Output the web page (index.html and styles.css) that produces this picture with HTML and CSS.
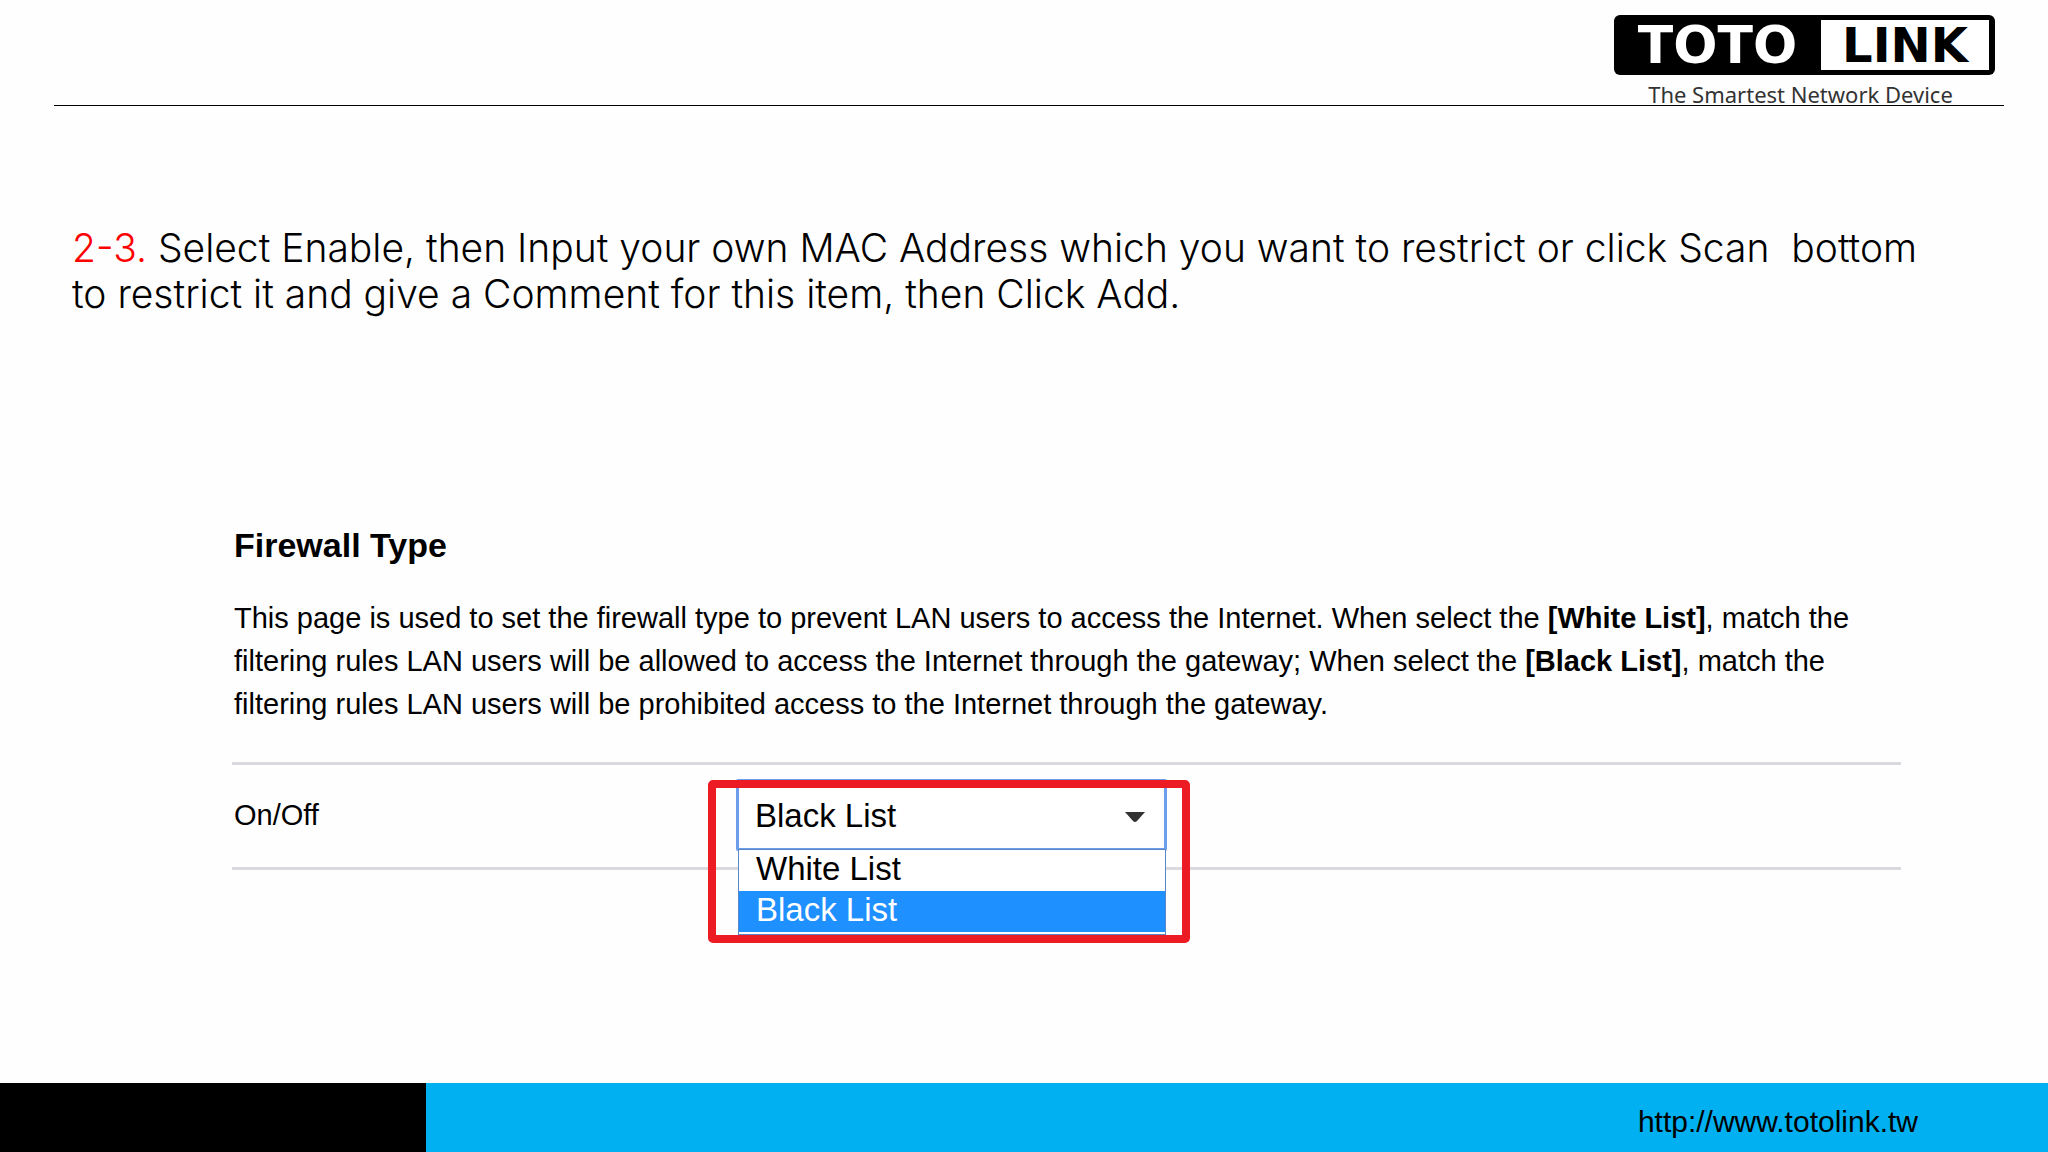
FILE: index.html
```
<!DOCTYPE html>
<html lang="en">

<head>
    <meta charset="UTF-8">
    <meta name="viewport" content="width=device-width, initial-scale=1.0">
    <title>TOTOLINK - Firewall Type</title>
    <link rel="stylesheet" href="styles.css">
</head>

<body>
    <header class="header">
        <div class="logo">
            <div class="logo-box">
                <span class="logo-toto">TOTO</span>
                <span class="logo-link">LINK</span>
            </div>
            <div class="logo-text">The Smartest Network Device</div>
        </div>
    </header>

    <main class="main">
        <p class="step"><span class="step-number">2-3.</span> Select Enable, then Input your own MAC Address which you want to restrict or click Scan&nbsp; bottom<br>to restrict it and give a Comment for this item, then Click Add.</p>

        <section class="firewall">
            <h1 class="title">Firewall Type</h1>
            <p class="description">This page is used to set the firewall type to prevent LAN users to access the Internet. When select the <b>[White List]</b>, match the filtering rules LAN users will be allowed to access the Internet through the gateway; When select the <b>[Black List]</b>, match the filtering rules LAN users will be prohibited access to the Internet through the gateway.</p>

            <div class="row">
                <label class="row-label" for="type">On/Off</label>
                <div class="select-wrap">
                    <select class="select" id="type">
                        <option>White List</option>
                        <option selected>Black List</option>
                    </select>
                    <svg class="arrow" width="20" height="10" viewBox="0 0 20 10">
                        <path d="M0 0h20l-8 9q-2 2-4 0z" fill="#333" />
                    </svg>
                    <ul class="list" role="listbox" aria-label="On/Off">
                        <li class="item" role="option">White List</li>
                        <li class="item active" role="option" aria-selected="true">Black List</li>
                    </ul>
                    <div class="mark"></div>
                </div>
            </div>
        </section>
    </main>

    <footer class="footer">
        <div class="footer-left"></div>
        <div class="footer-right">
            <a class="footer-link" href="http://www.totolink.tw">http://www.totolink.tw</a>
        </div>
    </footer>
</body>

</html>
```
FILE: styles.css
```
* {
    box-sizing: border-box;
}

body {
    display: flex;
    flex-direction: column;
    min-height: 100vh;
    margin: 0;
    background-color: #fefefe;
    color: #000;
    font-family: "Liberation Sans", Arial, sans-serif;
}

/* header */
.header {
    display: flex;
    justify-content: flex-end;
    margin: 0 44px 0 54px;
    padding: 15px 9px 0 0;
    border-bottom: 1px solid #000;
}

.logo {
    width: 381px;
}

.logo-box {
    display: flex;
    height: 60px;
    padding: 5px 6px 5px 0;
    border-radius: 6px;
    background-color: #000;
    font-family: "DejaVu Sans", sans-serif;
    font-weight: bold;
    line-height: 50px;
    text-align: center;
}

.logo-toto {
    flex: 207;
    color: #fff;
    font-size: 52px;
}

.logo-link {
    flex: 168;
    background-color: #fff;
    font-size: 48px;
}

.logo-text {
    height: 30px;
    padding-right: 8px;
    color: #333;
    font-family: "Noto Sans", sans-serif;
    font-size: 22px;
    line-height: 38px;
    text-align: center;
    white-space: nowrap;
}

/* content */
.main {
    padding: 119px 72px 0;
}

.step {
    margin: 0;
    font-family: Inter, sans-serif;
    font-size: 39px;
    font-weight: 300;
    line-height: 46px;
}

.step-number {
    color: #f00;
}

.firewall {
    margin: 208px 75px 0 160px;
}

.title {
    margin: 0;
    padding-left: 2px;
    font-size: 34px;
    line-height: 40px;
}

.description {
    margin: 32px 0 36px;
    padding-left: 2px;
    font-size: 29px;
    line-height: 43px;
}

.row {
    display: flex;
    padding: 14px 0 16px;
    border-top: 3px solid #dbd9de;
    border-bottom: 3px solid #dbd9de;
}

.row-label {
    width: 504px;
    padding-left: 2px;
    font-size: 29px;
    line-height: 72px;
}

.select-wrap {
    position: relative;
    width: 431px;
}

.select {
    display: block;
    width: 100%;
    height: 72px;
    padding: 0 16px;
    border: 3px solid #6c9eeb;
    border-radius: 2px;
    outline: none;
    background-color: #fff;
    color: #000;
    font-family: inherit;
    font-size: 33px;
    appearance: none;
}

.arrow {
    position: absolute;
    top: 33px;
    right: 22px;
}

.list {
    position: absolute;
    top: 70px;
    left: 2px;
    right: 1px;
    margin: 0;
    padding: 0 0 2px;
    border: 1px solid #5b87c9;
    background-color: #fff;
    list-style: none;
}

.item {
    height: 41px;
    padding-left: 17px;
    font-size: 33px;
    line-height: 38px;
}

.active {
    background-color: #1e90ff;
    color: #fff;
}

/* red frame around the opened list */
.mark {
    position: absolute;
    top: 1px;
    left: -28px;
    right: -23px;
    height: 163px;
    border: 8px solid #ed1c24;
    border-radius: 5px;
    pointer-events: none;
}

/* footer */
.footer {
    display: flex;
    height: 69px;
    margin-top: auto;
}

.footer-left {
    width: 426px;
    background-color: #000;
}

.footer-right {
    display: flex;
    flex: 1;
    align-items: center;
    justify-content: flex-end;
    padding: 8px 130px 0 0;
    background-color: #00b0f0;
}

.footer-link {
    color: #000;
    font-size: 30px;
    text-decoration: none;
}
```
